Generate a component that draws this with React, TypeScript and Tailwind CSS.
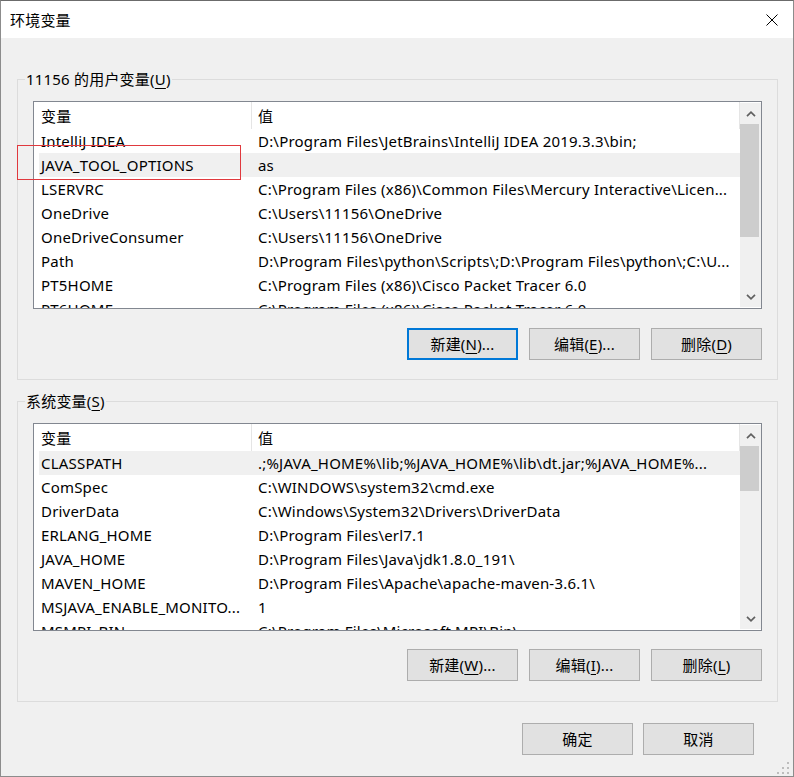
import type { ReactNode } from 'react';

type Row = [string, string];

const userVars: Row[] = [
  ['IntelliJ IDEA', 'D:\\Program Files\\JetBrains\\IntelliJ IDEA 2019.3.3\\bin;'],
  ['JAVA_TOOL_OPTIONS', 'as'],
  ['LSERVRC', 'C:\\Program Files (x86)\\Common Files\\Mercury Interactive\\Licen...'],
  ['OneDrive', 'C:\\Users\\11156\\OneDrive'],
  ['OneDriveConsumer', 'C:\\Users\\11156\\OneDrive'],
  ['Path', 'D:\\Program Files\\python\\Scripts\\;D:\\Program Files\\python\\;C:\\U...'],
  ['PT5HOME', 'C:\\Program Files (x86)\\Cisco Packet Tracer 6.0'],
  ['PT6HOME', 'C:\\Program Files (x86)\\Cisco Packet Tracer 6.0'],
];

const sysVars: Row[] = [
  ['CLASSPATH', '.;%JAVA_HOME%\\lib;%JAVA_HOME%\\lib\\dt.jar;%JAVA_HOME%...'],
  ['ComSpec', 'C:\\WINDOWS\\system32\\cmd.exe'],
  ['DriverData', 'C:\\Windows\\System32\\Drivers\\DriverData'],
  ['ERLANG_HOME', 'D:\\Program Files\\erl7.1'],
  ['JAVA_HOME', 'D:\\Program Files\\Java\\jdk1.8.0_191\\'],
  ['MAVEN_HOME', 'D:\\Program Files\\Apache\\apache-maven-3.6.1\\'],
  ['MSJAVA_ENABLE_MONITO...', '1'],
  ['MSMPI_BIN', 'C:\\Program Files\\Microsoft MPI\\Bin\\'],
];

function Key({ k }: { k: string }) {
  return <span className="underline decoration-1 underline-offset-[3px]">{k}</span>;
}

function WinButton({ children, focused = false }: { children: ReactNode; focused?: boolean }) {
  return (
    <button
      className={`flex h-[32px] w-[111px] shrink-0 items-center justify-center bg-[#e1e1e1] text-[15px] leading-none text-black ${
        focused ? 'border-2 border-[#0078d7]' : 'border border-[#adadad]'
      }`}
    >
      {children}
    </button>
  );
}

function Chevron({ up }: { up?: boolean }) {
  return (
    <svg width="10" height="6" viewBox="0 0 10 6">
      <path d={up ? 'M1 5.2 L5 1.2 L9 5.2' : 'M1 0.8 L5 4.8 L9 0.8'} stroke="#606060" strokeWidth="1.7" fill="none" />
    </svg>
  );
}

function ListView({ rows, selected, thumb }: { rows: Row[]; selected: number; thumb: number }) {
  return (
    <div className="flex h-[208px] border border-[#828790] bg-white">
      <div className="flex min-w-0 flex-1 flex-col overflow-hidden">
        {/* column header */}
        <div className="flex h-[27px] shrink-0">
          <div className="w-[218px] shrink-0 border-r border-[#e5e5e5] pl-[7px] pt-[2px] leading-[25px]">变量</div>
          <div className="flex-1 border-r border-[#e5e5e5] pl-[6px] pt-[2px] leading-[25px]">值</div>
        </div>
        {rows.map(([name, value], i) => (
          <div
            key={name}
            className={`ml-[5px] flex h-[24px] shrink-0 leading-[24px] ${i === selected ? 'bg-[#f0f0f0]' : ''}`}
          >
            <div className="w-[214px] shrink-0 overflow-hidden whitespace-nowrap pl-[2px]">{name}</div>
            <div className="min-w-0 flex-1 overflow-hidden whitespace-nowrap pl-[5px]">{value}</div>
          </div>
        ))}
      </div>
      {/* scrollbar */}
      <div className="my-[1px] flex w-[21px] shrink-0 flex-col bg-[#f0f0f0]">
        <div className="flex h-[21px] shrink-0 items-center justify-center">
          <Chevron up />
        </div>
        <div className="w-[19px] shrink-0 bg-[#cdcdcd]" style={{ height: thumb }} />
        <div className="flex-1" />
        <div className="flex h-[21px] shrink-0 items-center justify-center">
          <Chevron />
        </div>
      </div>
    </div>
  );
}

function GroupBox({
  label,
  rows,
  selected,
  thumb,
  buttons,
  className,
}: {
  label: ReactNode;
  rows: Row[];
  selected: number;
  thumb: number;
  buttons: ReactNode;
  className: string;
}) {
  return (
    <fieldset className={`ml-[16px] w-[761px] border border-[#dcdcdc] ${className}`}>
      <legend className="ml-[7px] px-[1px] leading-[20px]">{label}</legend>
      <div className="px-[15px]">
        <div className="mt-[12px]">
          <ListView rows={rows} selected={selected} thumb={thumb} />
        </div>
        {buttons}
      </div>
    </fieldset>
  );
}

export default function App() {
  return (
    <div className="relative flex h-[777px] w-[794px] flex-col border border-[#8c8c8c] border-t-[#6b6b6b] bg-[#f0f0f0] font-['Noto_Sans','Noto_Sans_CJK_SC',sans-serif] text-[15px] tracking-[0.2px] text-black">
      {/* title bar */}
      <div className="flex h-[37px] shrink-0 items-center justify-between bg-white pl-[9px] pr-[15px]">
        <span className="leading-[20px]">环境变量</span>
        <svg width="12" height="12" viewBox="0 0 12 12">
          <path d="M0.5 0.5 L11.5 11.5 M11.5 0.5 L0.5 11.5" stroke="#000" strokeWidth="1" />
        </svg>
      </div>

      <GroupBox
        className="mt-[31px] pb-[19px]"
        label={
          <>
            11156 的用户变量(<Key k="U" />)
          </>
        }
        rows={userVars}
        selected={1}
        thumb={113}
        buttons={
          <div className="mt-[19px] flex justify-end gap-[11px]">
            <WinButton focused>
              新建(<Key k="N" />)...
            </WinButton>
            <WinButton>
              编辑(<Key k="E" />)...
            </WinButton>
            <WinButton>
              删除(<Key k="D" />)
            </WinButton>
          </div>
        }
      />

      <GroupBox
        className="mt-[11px] pb-[20px]"
        label={
          <>
            系统变量(<Key k="S" />)
          </>
        }
        rows={sysVars}
        selected={0}
        thumb={45}
        buttons={
          <div className="mt-[18px] flex justify-end gap-[11px]">
            <WinButton>
              新建(<Key k="W" />)...
            </WinButton>
            <WinButton>
              编辑(<Key k="I" />)...
            </WinButton>
            <WinButton>
              删除(<Key k="L" />)
            </WinButton>
          </div>
        }
      />

      <div className="mt-[21px] flex justify-end gap-[10px] pr-[39px]">
        <WinButton>确定</WinButton>
        <WinButton>取消</WinButton>
      </div>

      {/* annotation box drawn over the list */}
      <div className="pointer-events-none absolute left-[16px] top-[144px] h-[35px] w-[224px] border border-[#e0393e]" />

      {/* resize grip */}
      <svg className="absolute bottom-[2px] right-[4px]" width="12" height="12" viewBox="0 0 12 12">
        <g fill="#bdbdbd">
          <rect x="10" y="0" width="2" height="2" />
          <rect x="5" y="5" width="2" height="2" />
          <rect x="10" y="5" width="2" height="2" />
          <rect x="0" y="10" width="2" height="2" />
          <rect x="5" y="10" width="2" height="2" />
          <rect x="10" y="10" width="2" height="2" />
        </g>
      </svg>
    </div>
  );
}
